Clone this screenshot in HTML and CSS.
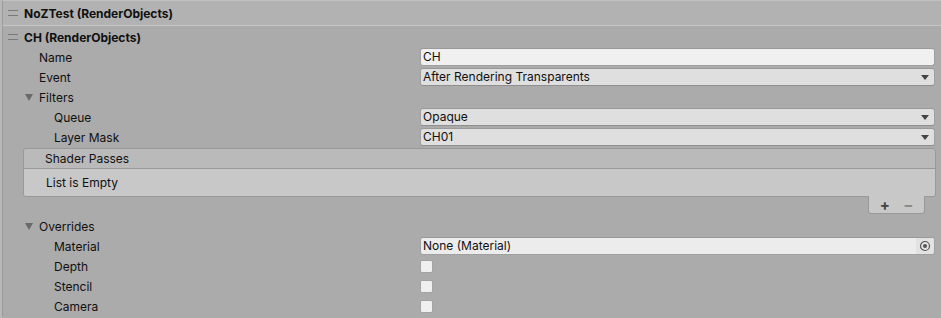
FILE: index.html
```html
<!DOCTYPE html>
<html>
<head>
    <title>Inspector</title>
    <link rel="stylesheet" href="styles.css">
</head>
<body>
    <div class="inspector">
        <!-- first feature header (collapsed) -->
        <div class="feature-header top">
            <span class="handle"></span>
            <span class="feature-title">NoZTest (RenderObjects)</span>
        </div>

        <!-- second feature -->
        <div class="feature">
            <div class="feature-header">
                <span class="handle"></span>
                <span class="feature-title">CH (RenderObjects)</span>
            </div>

            <div class="row">
                <span class="label lvl1">Name</span>
                <div class="field text">CH</div>
            </div>
            <div class="row">
                <span class="label lvl1">Event</span>
                <div class="field dropdown">After Rendering Transparents<span class="arrow"></span></div>
            </div>
            <div class="row">
                <span class="label lvl0"><span class="fold"></span>Filters</span>
            </div>
            <div class="row">
                <span class="label lvl2">Queue</span>
                <div class="field dropdown">Opaque<span class="arrow"></span></div>
            </div>
            <div class="row">
                <span class="label lvl2">Layer Mask</span>
                <div class="field dropdown">CH01<span class="arrow"></span></div>
            </div>

            <div class="list">
                <div class="list-head">Shader Passes</div>
                <div class="list-body">List is Empty</div>
            </div>
            <div class="list-foot">
                <span class="btn plus">+</span>
                <span class="btn minus">&minus;</span>
            </div>

            <div class="row">
                <span class="label lvl0"><span class="fold"></span>Overrides</span>
            </div>
            <div class="row">
                <span class="label lvl2">Material</span>
                <div class="field object">None (Material)
                    <span class="picker">
                        <svg width="12" height="12" viewBox="0 0 12 12">
                            <circle cx="6" cy="6" r="4.5" fill="none" stroke="#555" stroke-width="1.2"/>
                            <circle cx="6" cy="6" r="2" fill="#555"/>
                        </svg>
                    </span>
                </div>
            </div>
            <div class="row">
                <span class="label lvl2">Depth</span>
                <span class="check"></span>
            </div>
            <div class="row">
                <span class="label lvl2">Stencil</span>
                <span class="check"></span>
            </div>
            <div class="row">
                <span class="label lvl2">Camera</span>
                <span class="check"></span>
            </div>
        </div>
    </div>
</body>
</html>
```

FILE: styles.css
```css
html, body { margin: 0; padding: 0; }
body { background: #ababab; font-family: Inter, "Noto Sans", sans-serif; font-size: 12px; color: #101010; }

.inspector { width: 941px; height: 318px; overflow: hidden; border-left: 2px solid #b8b8b8; box-sizing: border-box; }
.inspector > * { border-left: 1px solid #9a9a9a; }

.feature-header { height: 21px; display: flex; align-items: center; font-weight: bold; padding-top: 1px; box-sizing: border-box; }
.feature-header.top { height: 26px; padding-top: 0; background: #b2b2b2; border-top: 1px solid #c2c2c2; border-bottom: 1px solid #c4c4c4; }
.handle { width: 10px; height: 4px; margin: 0 6px 0 5px; border-top: 1px solid #7a7a7a; border-bottom: 1px solid #7a7a7a; }

.row { height: 20px; display: flex; align-items: center; }
.label { box-sizing: border-box; width: 417px; flex: none; display: flex; align-items: center; }
.lvl0 { padding-left: 22px; }
.lvl1 { padding-left: 36px; }
.lvl2 { padding-left: 51px; }

.fold { width: 0; height: 0; border-left: 4px solid transparent; border-right: 4px solid transparent; border-top: 7px solid #6a6a6a; margin-right: 6px; }

.field { position: relative; width: 515px; height: 18px; box-sizing: border-box; border-radius: 3px; padding-left: 2px; line-height: 16px; border: 1px solid #a0a0a0; border-top-color: #999; }
.field.text { background: #f0f0f0; }
.field.dropdown { background: #dfdfdf; border-bottom-color: #8f8f8f; }
.field.object { background: #ececec; }
.arrow { position: absolute; right: 5px; top: 6px; width: 0; height: 0; border-left: 4px solid transparent; border-right: 4px solid transparent; border-top: 5px solid #444; }
.picker { position: absolute; right: 0; top: 0; bottom: 0; width: 18px; background: #e2e2e2; display: flex; align-items: center; justify-content: center; border-radius: 0 3px 3px 0; }

.check { width: 13px; height: 13px; box-sizing: border-box; background: #efefef; border: 1px solid #a3a3a3; border-radius: 2px; }

.list { margin: 1px 5px 0 20px; border: 1px solid #999; border-radius: 3px; overflow: hidden; }
.list-head { height: 19px; line-height: 19px; padding-left: 21px; background: #bababa; border-bottom: 1px solid #999; }
.list-body { height: 27px; line-height: 27px; padding-left: 22px; background: #c8c8c8; }
.list-foot { margin: -1px 0 0 865px; width: 57px; height: 18px; box-sizing: border-box; background: #c8c8c8; border: 1px solid #999; border-top: none; border-radius: 0 0 3px 3px; display: flex; align-items: center; justify-content: space-around; padding: 0 4px; }
.btn { font-size: 15px; font-weight: bold; line-height: 16px; }
.btn.plus { color: #444; }
.btn.minus { color: #8a8a8a; }
.list-foot + .row { margin-top: 2px; }
```
